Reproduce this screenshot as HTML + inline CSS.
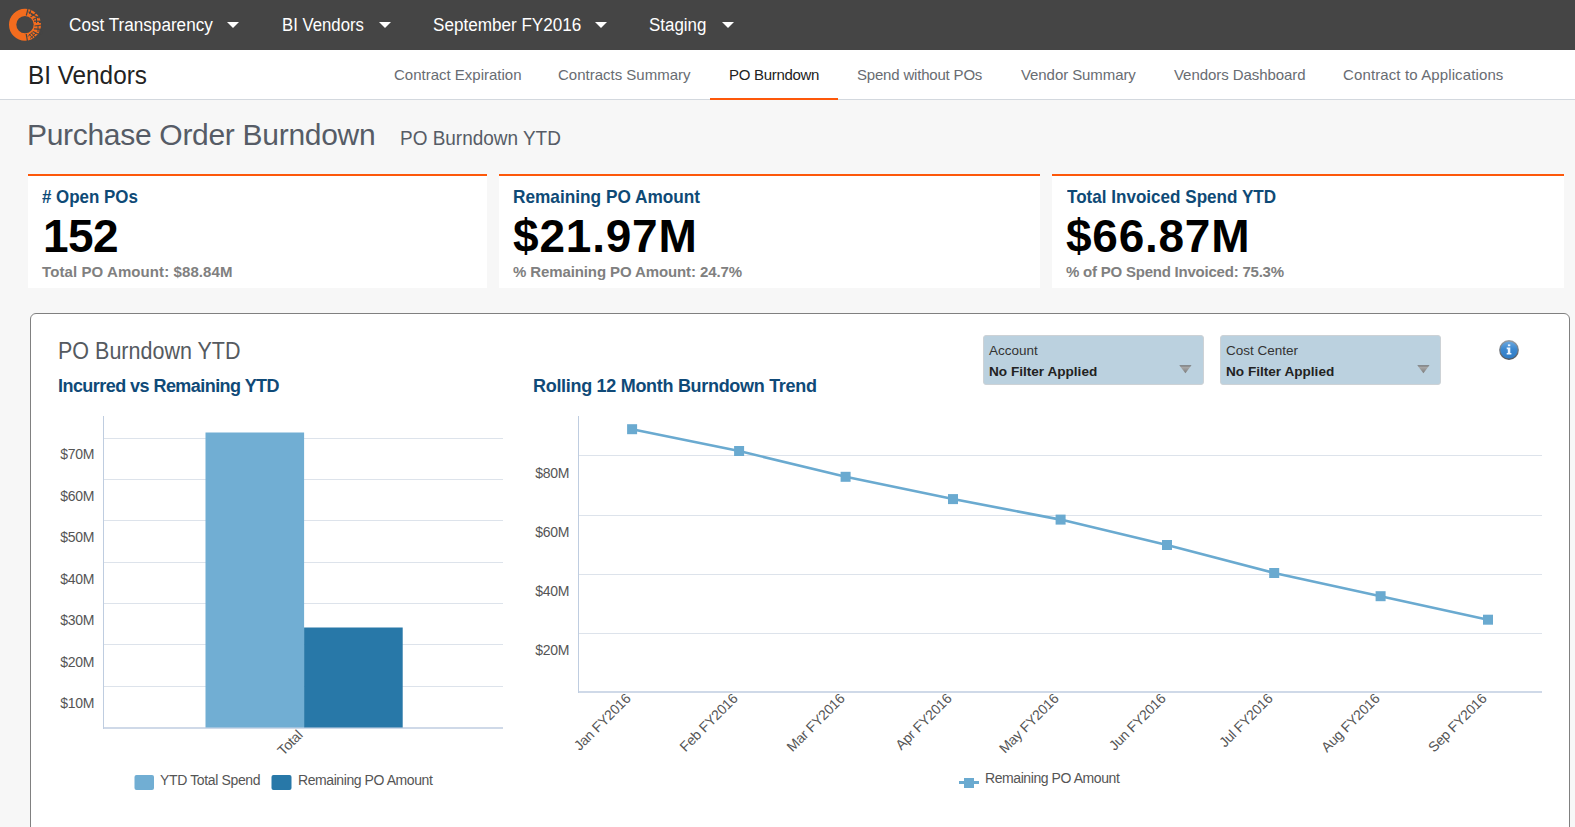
<!DOCTYPE html>
<html><head><meta charset="utf-8">
<style>
*{margin:0;padding:0;box-sizing:border-box}
html,body{width:1575px;height:827px;overflow:hidden;background:#f7f7f7;font-family:"Liberation Sans",sans-serif}
.abs{position:absolute;white-space:nowrap}
#top{position:absolute;left:0;top:0;width:1575px;height:50px;background:#454545}
.tn{position:absolute;top:0;height:50px;line-height:50px;color:#fff;font-size:18px;transform-origin:0 0}
.tri{position:absolute;top:22px;width:0;height:0;border-left:6px solid transparent;border-right:6px solid transparent;border-top:6px solid #fff}
#sub{position:absolute;left:0;top:50px;width:1575px;height:50px;background:#fff;border-bottom:1px solid #d3d8de}
.tab{position:absolute;top:0;height:49px;line-height:49px;font-size:15px;color:#686c72}
.card{position:absolute;top:174px;height:114px;background:#fff;border-top:2px solid #fd580a}
.kt{position:absolute;left:14px;font-weight:bold;font-size:18.5px;color:#0e4a76;transform-origin:0 0}
.kv{position:absolute;left:14px;font-weight:bold;font-size:46px;color:#000}
.ks{position:absolute;left:14px;font-weight:bold;font-size:15px;color:#808080}
#panel{position:absolute;left:30px;top:313px;width:1540px;height:600px;background:#fff;border:1px solid #808080;border-radius:6px}
.flt{position:absolute;top:335px;height:50px;background:#bbd1df;border-radius:3px;border:1px solid #cdd2d6}
.fl{position:absolute;left:5px;top:7px;font-size:13.5px;color:#333}
.fv{position:absolute;left:5px;top:27.5px;font-size:13.6px;font-weight:bold;color:#222}
.ftri{position:absolute;top:29px;width:0;height:0;border-left:6px solid transparent;border-right:6px solid transparent;border-top:8px solid #888}
</style></head>
<body>
<div id="top">
  <svg class="abs" style="left:0;top:0" width="50" height="50" viewBox="0 0 50 50">
    <path fill-rule="evenodd" fill="#f36c1e" d="M25 8.7 A16 16 0 1 1 25 40.7 A16 16 0 1 1 25 8.7 Z M25 15.9 A8.7 8.7 0 1 0 25 33.3 A8.7 8.7 0 1 0 25 15.9 Z"/>
    <g stroke="#454545" fill="none">
      <path d="M26.3 15.5 L28.2 8" stroke-width="1.2"/>
      <path d="M29.5 14 L31.5 8.5" stroke-width="1"/>
      <path d="M28.5 11.8 L34 15" stroke-width="1.2"/>
      <path d="M30.5 17 L37 12.5" stroke-width="1.1"/>
      <path d="M31 14 L39 18" stroke-width="1.2"/>
      <path d="M33 19.5 L40 16" stroke-width="1.1"/>
      <path d="M34 21.2 L42 21.2" stroke-width="1.2"/>
      <path d="M36.5 23 L36.5 18" stroke-width="1"/>
      <path d="M34.5 26 L42 25" stroke-width="1.1"/>
      <path d="M39 22 L42 22" stroke-width="2"/>
      <path d="M34 28.8 L42 29.3" stroke-width="1.2"/>
      <path d="M38 26 L38 32" stroke-width="1"/>
      <path d="M40 30 L42 34" stroke-width="2.2"/>
      <path d="M33 31.5 L40 35" stroke-width="1.2"/>
      <path d="M31.5 33 L36 38" stroke-width="1.1"/>
      <path d="M29 34 L34.5 40" stroke-width="1"/>
      <path d="M30 38.5 L36 33" stroke-width="1"/>
      <path d="M28 36.5 L33 31.5" stroke-width="1"/>
      <path d="M35 39 L38 36" stroke-width="2.5"/>
      <path d="M37.5 11 L40 14" stroke-width="2.5"/>
      <path d="M26.2 33.8 L27.5 41.5" stroke-width="1.2"/>
    </g>
  </svg>
  <div class="tn" style="left:69px;transform:scaleX(0.952)">Cost Transparency</div><div class="tri" style="left:227px"></div>
  <div class="tn" style="left:282px;transform:scaleX(0.93)">BI Vendors</div><div class="tri" style="left:379px"></div>
  <div class="tn" style="left:433px;transform:scaleX(0.95)">September FY2016</div><div class="tri" style="left:595px"></div>
  <div class="tn" style="left:649px;transform:scaleX(0.94)">Staging</div><div class="tri" style="left:722px"></div>
</div>
<div id="sub">
  <div class="abs" style="left:28px;top:10.5px;font-size:25.5px;transform:scaleX(0.953);transform-origin:0 0;color:#222">BI Vendors</div>
  <div class="tab" style="left:394px">Contract Expiration</div>
  <div class="tab" style="left:558px">Contracts Summary</div>
  <div class="tab" style="left:729px;color:#222;letter-spacing:-0.3px">PO Burndown</div>
  <div class="tab" style="left:857px;letter-spacing:-0.19px">Spend without POs</div>
  <div class="tab" style="left:1021px;letter-spacing:-0.08px">Vendor Summary</div>
  <div class="tab" style="left:1174px;letter-spacing:-0.06px">Vendors Dashboard</div>
  <div class="tab" style="left:1343px;letter-spacing:0.12px">Contract to Applications</div>
  <div class="abs" style="left:710px;top:48px;width:128px;height:2px;background:#fd580a"></div>
</div>

<div class="abs" style="left:27px;top:117.5px;font-size:30px;letter-spacing:-0.3px;color:#565c66">Purchase Order Burndown</div>
<div class="abs" style="left:400px;top:126.5px;font-size:20px;transform:scaleX(0.948);transform-origin:0 0;color:#565c66">PO Burndown YTD</div>

<div class="card" style="left:28px;width:459px">
  <div class="kt" style="top:9.5px;transform:scaleX(0.915)"># Open POs</div>
  <div class="kv" style="top:33px;left:15px;letter-spacing:-0.6px">152</div>
  <div class="ks" style="top:87px;letter-spacing:0.09px">Total PO Amount: $88.84M</div>
</div>
<div class="card" style="left:499px;width:541px">
  <div class="kt" style="top:9.5px;transform:scaleX(0.932)">Remaining PO Amount</div>
  <div class="kv" style="top:33px;letter-spacing:0.8px">$21.97M</div>
  <div class="ks" style="top:87px;letter-spacing:-0.11px">% Remaining PO Amount: 24.7%</div>
</div>
<div class="card" style="left:1052px;width:512px">
  <div class="kt" style="top:9.5px;left:15px;transform:scaleX(0.923)">Total Invoiced Spend YTD</div>
  <div class="kv" style="top:33px;letter-spacing:0.75px">$66.87M</div>
  <div class="ks" style="top:87px;letter-spacing:-0.22px">% of PO Spend Invoiced: 75.3%</div>
</div>

<div id="panel"></div>
<div class="abs" style="left:58px;top:338px;font-size:23px;transform:scaleX(0.935);transform-origin:0 0;color:#555a60">PO Burndown YTD</div>
<div class="abs" style="left:58px;top:375.5px;font-size:18px;letter-spacing:-0.55px;font-weight:bold;color:#0f4a78">Incurred vs Remaining YTD</div>
<div class="abs" style="left:533px;top:375.5px;font-size:18px;letter-spacing:-0.3px;font-weight:bold;color:#0f4a78">Rolling 12 Month Burndown Trend</div>

<div class="flt" style="left:983px;width:221px"><div class="fl">Account</div><div class="fv">No Filter Applied</div><svg class="abs" style="left:195px;top:29px" width="13" height="9" viewBox="0 0 13 9"><defs><linearGradient id="tg1" x1="0" y1="0" x2="0" y2="1"><stop offset="0" stop-color="#6e6e6e"/><stop offset="0.25" stop-color="#a8a8a8"/><stop offset="1" stop-color="#7a7a7a"/></linearGradient></defs><path d="M0.3 0.3 H12.5 L6.4 8.3 Z" fill="url(#tg1)"/></svg></div>
<div class="flt" style="left:1220px;width:221px"><div class="fl">Cost Center</div><div class="fv">No Filter Applied</div><svg class="abs" style="left:196px;top:29px" width="13" height="9" viewBox="0 0 13 9"><defs><linearGradient id="tg2" x1="0" y1="0" x2="0" y2="1"><stop offset="0" stop-color="#6e6e6e"/><stop offset="0.25" stop-color="#a8a8a8"/><stop offset="1" stop-color="#7a7a7a"/></linearGradient></defs><path d="M0.3 0.3 H12.5 L6.4 8.3 Z" fill="url(#tg2)"/></svg></div>

<svg class="abs" style="left:1498px;top:339px" width="22" height="22" viewBox="0 0 22 22">
  <defs>
    <linearGradient id="ig" x1="0" y1="0" x2="0" y2="1">
      <stop offset="0" stop-color="#6aa8e0"/><stop offset="0.45" stop-color="#3d88cf"/><stop offset="1" stop-color="#2f7cc6"/>
    </linearGradient>
    <linearGradient id="ib" x1="0" y1="0" x2="0" y2="1">
      <stop offset="0" stop-color="#9a9fa5"/><stop offset="1" stop-color="#50555c"/>
    </linearGradient>
  </defs>
  <circle cx="11" cy="11" r="9.9" fill="url(#ib)"/>
  <circle cx="11" cy="11" r="8.6" fill="url(#ig)"/>
  <rect x="9.9" y="5.4" width="2.4" height="1.8" fill="#eef6ff"/>
  <path d="M8.7 8.6 H12.3 V13.9 H13.4 V15.6 H8.7 V13.9 H9.8 V10.2 H8.7 Z" fill="#eef6ff"/>
</svg>

<!-- charts -->
<svg class="abs" style="left:0;top:0" width="1575" height="827" viewBox="0 0 1575 827" font-family="Liberation Sans" font-size="14" letter-spacing="-0.22" fill="#555">
  <!-- bar chart grid -->
  <g stroke="#dde3eb" stroke-width="1">
    <line x1="104" y1="438.5" x2="503" y2="438.5"/>
    <line x1="104" y1="479.5" x2="503" y2="479.5"/>
    <line x1="104" y1="520.5" x2="503" y2="520.5"/>
    <line x1="104" y1="562.5" x2="503" y2="562.5"/>
    <line x1="104" y1="603.5" x2="503" y2="603.5"/>
    <line x1="104" y1="644.5" x2="503" y2="644.5"/>
    <line x1="104" y1="686.5" x2="503" y2="686.5"/>
  </g>
  <line x1="103.5" y1="416" x2="103.5" y2="729" stroke="#bfcde0"/>
  <line x1="103" y1="728" x2="503" y2="728" stroke="#bfcde0" stroke-width="1.6"/>
  <rect x="205.5" y="432.5" width="98.6" height="295" fill="#71aed3"/>
  <rect x="304.1" y="627.5" width="98.6" height="100" fill="#2878a8"/>
  <g text-anchor="end" font-size="14" letter-spacing="-0.3">
    <text x="94" y="459">$70M</text>
    <text x="94" y="500.5">$60M</text>
    <text x="94" y="542">$50M</text>
    <text x="94" y="583.5">$40M</text>
    <text x="94" y="625">$30M</text>
    <text x="94" y="666.7">$20M</text>
    <text x="94" y="707.8">$10M</text>
  </g>
  <text x="0" y="0" text-anchor="end" transform="translate(303.5 736) rotate(-45)">Total</text>
  <rect x="134.5" y="775" width="19.5" height="15" rx="2" fill="#71aed3"/>
  <text x="160" y="785" letter-spacing="-0.36">YTD Total Spend</text>
  <rect x="271.5" y="775" width="20" height="15" rx="2" fill="#2878a8"/>
  <text x="298" y="785" letter-spacing="-0.42">Remaining PO Amount</text>

  <!-- line chart -->
  <g stroke="#dde3eb" stroke-width="1">
    <line x1="579" y1="455.5" x2="1542" y2="455.5"/>
    <line x1="579" y1="515.5" x2="1542" y2="515.5"/>
    <line x1="579" y1="574.5" x2="1542" y2="574.5"/>
    <line x1="579" y1="633.5" x2="1542" y2="633.5"/>
  </g>
  <line x1="578.5" y1="416" x2="578.5" y2="693" stroke="#bfcde0"/>
  <line x1="578" y1="692" x2="1542" y2="692" stroke="#bfcde0" stroke-width="1.6"/>
  <g text-anchor="end" font-size="14" letter-spacing="-0.3">
    <text x="569" y="478">$80M</text>
    <text x="569" y="537">$60M</text>
    <text x="569" y="596">$40M</text>
    <text x="569" y="655">$20M</text>
  </g>
  <polyline fill="none" stroke="#6aaad0" stroke-width="2.6" points="632.1,429.2 739.1,451 845.6,476.8 953,499.1 1060.6,519.6 1167,545 1274.2,573 1380.6,596.2 1488,619.7"/>
  <g fill="#6aaad0">
    <rect x="627.1" y="424.2" width="10" height="10"/>
    <rect x="734.1" y="446" width="10" height="10"/>
    <rect x="840.6" y="471.8" width="10" height="10"/>
    <rect x="948" y="494.1" width="10" height="10"/>
    <rect x="1055.6" y="514.6" width="10" height="10"/>
    <rect x="1162" y="540" width="10" height="10"/>
    <rect x="1269.2" y="568" width="10" height="10"/>
    <rect x="1375.6" y="591.2" width="10" height="10"/>
    <rect x="1483" y="614.7" width="10" height="10"/>
  </g>
  <g text-anchor="end">
    <text transform="translate(631.5 699.5) rotate(-45)">Jan FY2016</text>
    <text transform="translate(738.5 699.5) rotate(-45)">Feb FY2016</text>
    <text transform="translate(845.5 699.5) rotate(-45)">Mar FY2016</text>
    <text transform="translate(952.5 699.5) rotate(-45)">Apr FY2016</text>
    <text transform="translate(1059.5 699.5) rotate(-45)">May FY2016</text>
    <text transform="translate(1166.5 699.5) rotate(-45)">Jun FY2016</text>
    <text transform="translate(1273.5 699.5) rotate(-45)">Jul FY2016</text>
    <text transform="translate(1380.5 699.5) rotate(-45)">Aug FY2016</text>
    <text transform="translate(1487.5 699.5) rotate(-45)">Sep FY2016</text>
  </g>
  <line x1="959" y1="782.5" x2="979" y2="782.5" stroke="#6aaad0" stroke-width="3"/>
  <rect x="964" y="778" width="10" height="10" fill="#6aaad0"/>
  <text x="985" y="783" letter-spacing="-0.42">Remaining PO Amount</text>
</svg>
</body></html>
